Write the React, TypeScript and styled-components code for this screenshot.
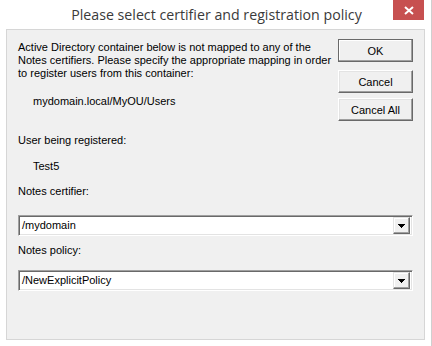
import React from "react";
import styled, { createGlobalStyle } from "styled-components";

const Global = createGlobalStyle`
  html, body { margin: 0; padding: 0; background: #ffffff; }
  body { width: 432px; height: 346px; overflow: hidden; }
`;

const Window = styled.div`
  width: 432px;
  height: 346px;
  box-sizing: border-box;
  background: #ffffff;
  border-right: 1px solid #cfcfcf;
  display: flex;
  flex-direction: column;
`;

const TitleBar = styled.div`
  height: 29px;
  display: flex;
  align-items: flex-start;
  position: relative;
`;

const Title = styled.div`
  flex: 1;
  text-align: center;
  font-family: "Segoe UI", "Open Sans", "Noto Sans", sans-serif;
  font-size: 14.2px;
  color: #3a3a3a;
  line-height: 20px;
  padding-top: 5px;
  padding-left: 2px;
`;

const CloseButton = styled.div`
  position: absolute;
  top: 0;
  right: 7px;
  width: 31px;
  height: 20px;
  background: #c75050;
  display: flex;
  align-items: center;
  justify-content: center;
`;

const Client = styled.div`
  margin: 0 6px;
  height: 311px;
  box-sizing: border-box;
  border: 1px solid #d6d6d6;
  background: #f0f0f0;
  padding: 9px 11px 0 11px;
  font-family: "Liberation Sans", Arial, sans-serif;
  font-size: 11px;
  color: #000;
  display: flex;
  flex-direction: column;
`;

const TopRow = styled.div`
  display: flex;
  justify-content: space-between;
`;

const Message = styled.div`
  flex: 1;
  min-width: 0;
  display: flex;
  flex-direction: column;
`;

const Text = styled.div<{ $indent?: boolean; $mt?: number }>`
  line-height: 13px;
  padding-left: ${(p) => (p.$indent ? 15 : 0)}px;
  margin-top: ${(p) => p.$mt ?? 0}px;
  white-space: pre;
`;

const ButtonCol = styled.div`
  flex-shrink: 0;
  display: flex;
  flex-direction: column;
`;

const Button = styled.div<{ $default?: boolean; $mt?: number }>`
  width: 75px;
  height: 23px;
  margin-top: ${(p) => p.$mt ?? 0}px;
  box-sizing: border-box;
  background: #f0f0f0;
  display: flex;
  align-items: center;
  justify-content: center;
  border: 1px solid ${(p) => (p.$default ? "#6a6a6a" : "#ffffff")};
  border-right-color: #696969;
  border-bottom-color: #696969;
  box-shadow: inset -1px -1px 0 #a0a0a0, inset 1px 1px 0 ${(p) => (p.$default ? "#ffffff" : "#e3e3e3")};
  color: #000;
`;

const Combo = styled.div<{ $mt?: number }>`
  margin-top: ${(p) => p.$mt ?? 0}px;
  height: 21px;
  box-sizing: border-box;
  border: 1px solid #a0a0a0;
  border-right-color: #ffffff;
  border-bottom-color: #ffffff;
  box-shadow: inset 1px 1px 0 #696969, inset -1px -1px 0 #e3e3e3;
  background: #ffffff;
  display: flex;
  align-items: center;
  padding: 2px;
`;

const ComboText = styled.div`
  flex: 1;
  padding-left: 1px;
  line-height: 15px;
`;

const DropButton = styled.div`
  width: 17px;
  height: 17px;
  box-sizing: border-box;
  background: #f0f0f0;
  border: 1px solid #e3e3e3;
  border-right-color: #696969;
  border-bottom-color: #696969;
  box-shadow: inset -1px -1px 0 #a0a0a0, inset 1px 1px 0 #ffffff;
  display: flex;
  align-items: center;
  justify-content: center;
`;

const Arrow = () => (
  <svg width="7" height="4" viewBox="0 0 7 4">
    <path d="M0 0h7L3.5 4z" fill="#000" shapeRendering="crispEdges" />
  </svg>
);

export default function App() {
  return (
    <>
      <Global />
      <Window>
        <TitleBar>
          <Title>Please select certifier and registration policy</Title>
          <CloseButton>
            <svg width="10" height="9" viewBox="0 0 10 9">
              <path d="M1 1l8 7M9 1L1 8" stroke="#fff" strokeWidth="2" />
            </svg>
          </CloseButton>
        </TitleBar>
        <Client>
          <TopRow>
            <Message>
              <Text $mt={2}>Active Directory container below is not mapped to any of the</Text>
              <Text>Notes certifiers. Please specify the appropriate mapping in order</Text>
              <Text>to register users from this container:</Text>
              <Text $indent $mt={15}>mydomain.local/MyOU/Users</Text>
            </Message>
            <ButtonCol>
              <Button $default>OK</Button>
              <Button $mt={8}>Cancel</Button>
              <Button $mt={5}>Cancel All</Button>
            </ButtonCol>
          </TopRow>
          <Text $mt={13}>User being registered:</Text>
          <Text $indent $mt={13}>Test5</Text>
          <Text $mt={12}>Notes certifier:</Text>
          <Combo $mt={17}>
            <ComboText>/mydomain</ComboText>
            <DropButton><Arrow /></DropButton>
          </Combo>
          <Text $mt={8}>Notes policy:</Text>
          <Combo $mt={13}>
            <ComboText>/NewExplicitPolicy</ComboText>
            <DropButton><Arrow /></DropButton>
          </Combo>
        </Client>
      </Window>
    </>
  );
}
